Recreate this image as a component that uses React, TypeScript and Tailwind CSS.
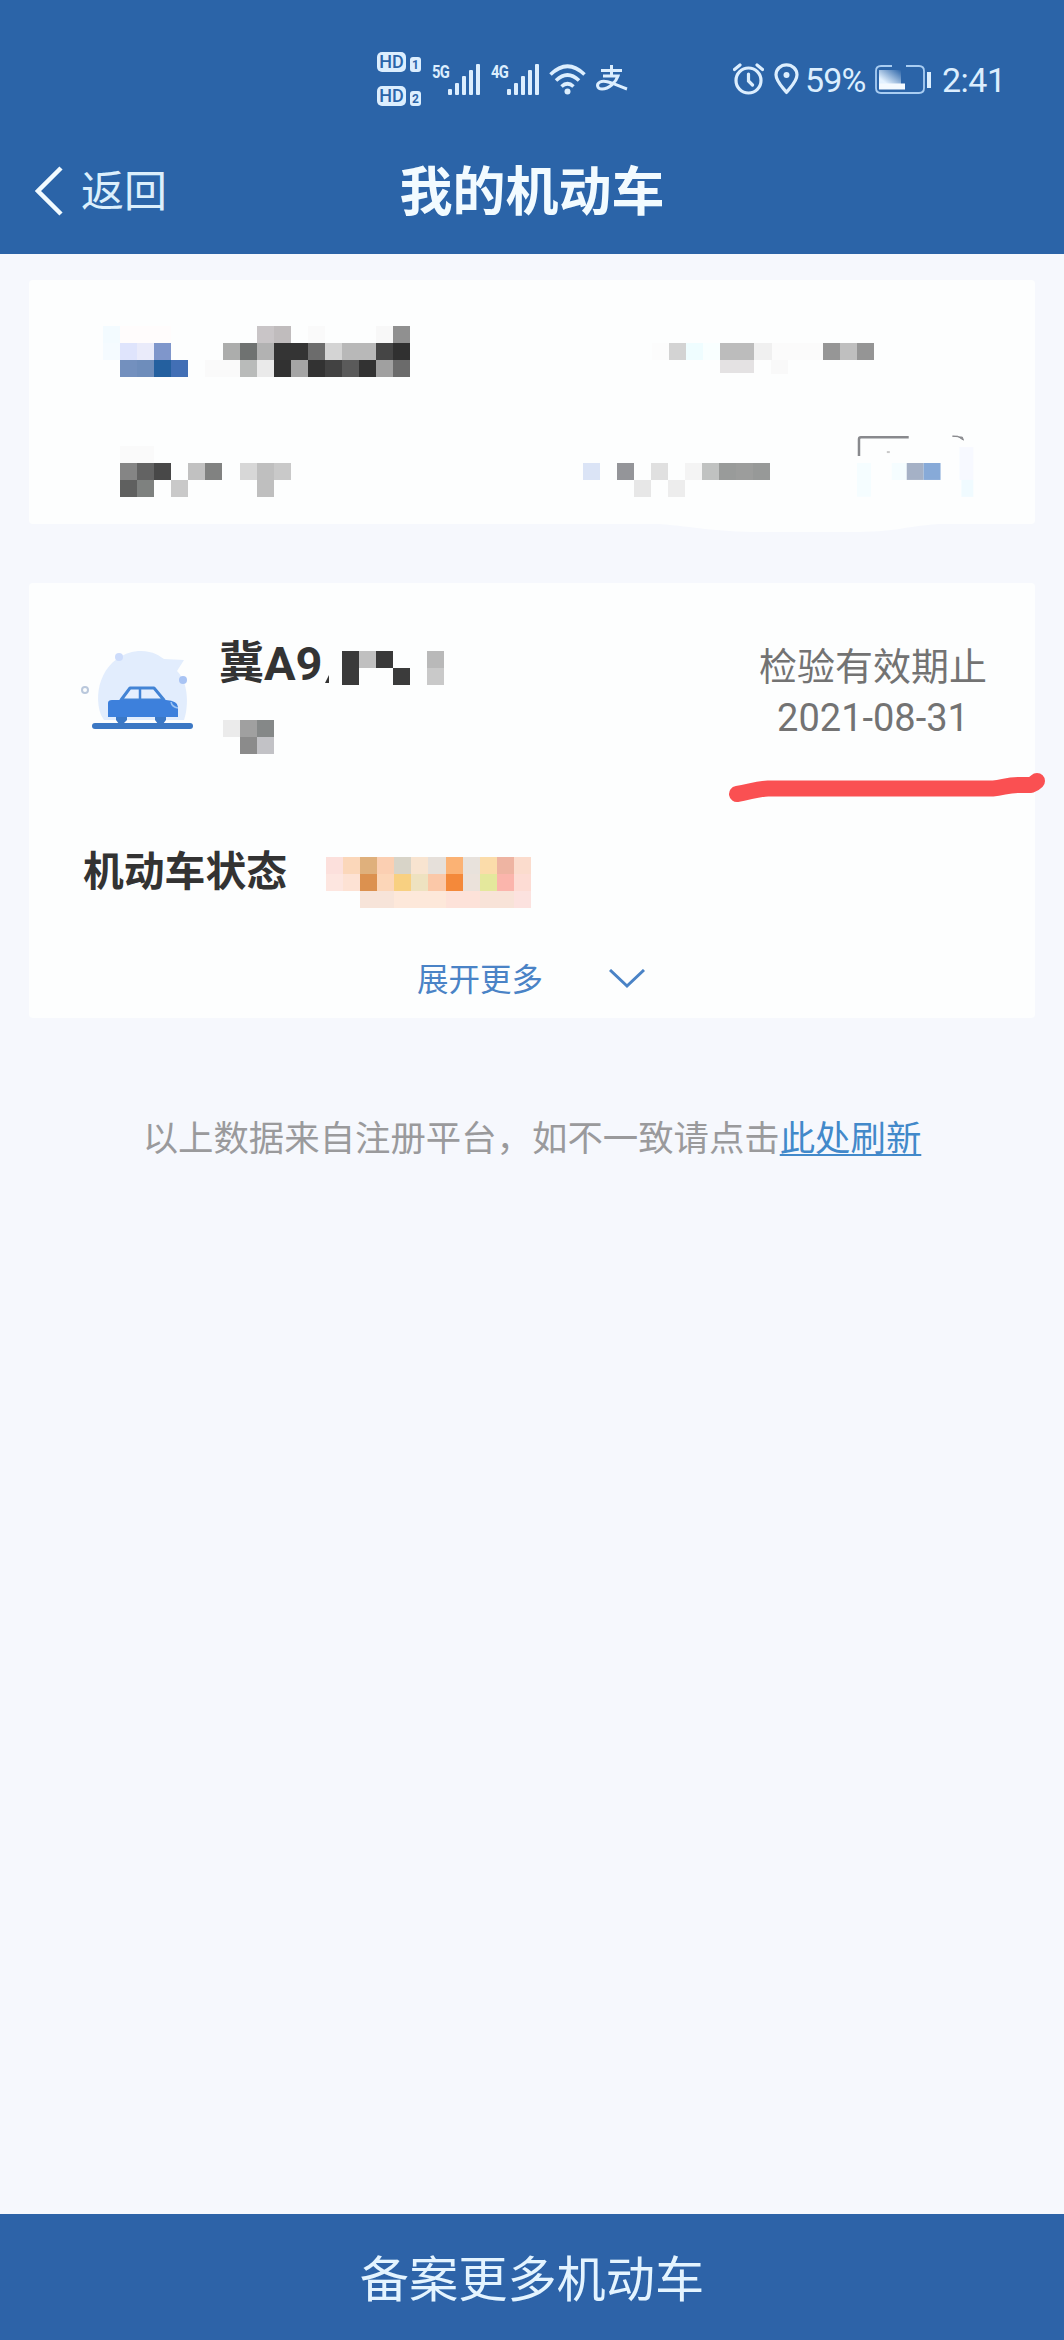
import React from 'react';

type Tile = [col: number, row: number, fill: string, span?: number];

const TILE = 17.08;

function Mosaic({ cols, rows, tiles, className }: { cols: number; rows: number; tiles: Tile[]; className?: string }) {
  const w = cols * TILE;
  const h = rows * TILE;
  return (
    <svg width={w} height={h} viewBox={`0 0 ${w} ${h}`} shapeRendering="crispEdges" className={className} aria-hidden="true">
      {tiles.map(([c, r, fill, span = 1], i) => (
        <rect key={i} x={c * TILE} y={r * TILE} width={span * TILE} height={TILE} fill={fill} />
      ))}
    </svg>
  );
}

const ownerName: Tile[] = [
  [0, 0, '#f3fbff'], [1, 0, '#fffcfc', 3],
  [0, 1, '#f5fbff'], [1, 1, '#dfe4fc'], [2, 1, '#eaebfa'], [3, 1, '#7f96cb'],
  [1, 2, '#7390be'], [2, 2, '#6e8dbb'], [3, 2, '#24609f'], [4, 2, '#426fb5'],
  [9, 0, '#c9c5c7'], [10, 0, '#c0bcbd'], [12, 0, '#fafafa'], [16, 0, '#f8f8f8'], [17, 0, '#909090'],
  [7, 1, '#acadac'], [8, 1, '#6f7271'], [9, 1, '#b2b2b2'], [10, 1, '#343434', 2], [12, 1, '#6c6c6c'],
  [13, 1, '#d4d4d4'], [14, 1, '#b8b8b8', 2], [16, 1, '#454545'], [17, 1, '#303030'],
  [6, 2, '#fafafa', 2], [8, 2, '#b9bbba'], [9, 2, '#eaeaea'], [10, 2, '#313131'], [11, 2, '#a5a5a5'], [12, 2, '#323232'],
  [13, 2, '#424242'], [14, 2, '#5a5a5a'], [15, 2, '#323232'], [16, 2, '#a0a0a0'], [17, 2, '#6b6b6b'],
];

const ownerId: Tile[] = [
  [0, 0, '#fcfcfc'], [1, 0, '#d3d3d3'], [2, 0, '#effdff'], [3, 0, '#f9ffff'], [4, 0, '#bcbcbc', 2], [6, 0, '#f0f0f0'],
  [7, 0, '#fbfbfb', 3], [10, 0, '#969696'], [11, 0, '#bfbfbf'], [12, 0, '#959595'],
];

const docType: Tile[] = [
  [0, 0, '#fafafa', 2],
  [0, 1, '#858585'], [1, 1, '#636363'], [2, 1, '#484848'], [4, 1, '#c1c1c1'], [5, 1, '#818281'],
  [7, 1, '#d7d7d7'], [8, 1, '#bfbfbf'], [9, 1, '#c9c9c9'],
  [0, 2, '#5f605f'], [1, 2, '#7e817f'], [3, 2, '#c9c9c9'], [8, 2, '#bfbfbf'],
];

const phone: Tile[] = [
  [0, 0, '#dbe4f6'], [2, 0, '#949599'], [4, 0, '#e0e0e0'], [6, 0, '#f4f4f4'], [7, 0, '#c0c2c1'],
  [8, 0, '#999b9a'], [9, 0, '#9c9d9c'], [10, 0, '#979998'],
  [3, 1, '#e7e7e7'], [5, 1, '#ededed'],
];

const statusTiles: Tile[] = [
  [0, 0, '#fce0dc'], [1, 0, '#fbd7ba'], [2, 0, '#dfb07c'], [3, 0, '#fbcfb2'], [4, 0, '#d8d4c8'], [5, 0, '#f8e4d0'],
  [6, 0, '#e6e0da'], [7, 0, '#fbb274'], [8, 0, '#e8e2dc'], [9, 0, '#fbdcaa'], [10, 0, '#eeb4a2'], [11, 0, '#fbdccd'],
  [0, 1, '#fde6e0'], [1, 1, '#fde2d4'], [2, 1, '#dc914f'], [3, 1, '#fcd6b8'], [4, 1, '#f8d081'], [5, 1, '#eee2c0'],
  [6, 1, '#fbc8a8'], [7, 1, '#f4893a'], [8, 1, '#ebe2db'], [9, 1, '#e4e89c'], [10, 1, '#fbb5ac'], [11, 1, '#fddcd4'],
  [2, 2, '#f7e4d9', 2], [4, 2, '#fde8da', 3], [7, 2, '#fde2d9', 2], [9, 2, '#f8e3d8', 2], [11, 2, '#fce2df'],
];

function HdBadge({ n }: { n: string }) {
  return (
    <div className="flex items-end gap-1">
      <span className="flex h-5 w-[29px] items-center justify-center rounded-[5px] bg-[#dceefe] text-[18px] leading-none font-medium text-[#2b64a8]">HD</span>
      <span className="flex h-[15px] w-[11px] items-center justify-center rounded-[3px] bg-[#dceefe] text-[12px] leading-none font-bold text-[#2b64a8]">{n}</span>
    </div>
  );
}

function Signal({ label }: { label: string }) {
  return (
    <div className="flex h-[31px] items-start">
      <span className="w-4">
        <span className="block w-[20px] origin-left scale-x-[0.82] text-[18px] leading-[15px] font-bold tracking-[-0.8px]">{label}</span>
      </span>
      <svg width="33" height="31" viewBox="0 0 33 31" fill="currentColor">
        <rect x="0" y="25" width="4" height="6" rx="1" />
        <rect x="7" y="19" width="4" height="12" rx="1" />
        <rect x="14" y="12" width="4" height="19" rx="1" />
        <rect x="21" y="6" width="4" height="25" rx="1" />
        <rect x="28" y="0" width="4" height="31" rx="1" />
      </svg>
    </div>
  );
}

function StatusBar() {
  return (
    <div className="flex h-[158px] items-center pl-[377px] text-[#dceefe]">
      <div className="flex flex-col gap-[14px]">
        <HdBadge n="1" />
        <HdBadge n="2" />
      </div>
      <div className="ml-[11px] flex gap-[10px]">
        <Signal label="5G" />
        <Signal label="4G" />
      </div>
      <svg width="37" height="31" viewBox="0 0 37 31" fill="none" stroke="currentColor" strokeWidth="3.6" className="ml-[9px]">
        <path d="M1.5 10.5Q18.500-6 35.500 10.500" />
        <path d="M7 16.500Q18.500 5.500 30 16.500" />
        <path d="M12.500 22.500Q18.500 17 24.500 22.500" />
        <circle cx="18.500" cy="27.500" r="3" fill="currentColor" stroke="none" />
      </svg>
      <svg width="34" height="28" viewBox="0 0 34 28" fill="none" stroke="currentColor" strokeWidth="3" className="ml-[9px]">
        <path d="M6 5.500H27M16.500 0V11M8 11H23C21 17 14 24 7 24C2 24 1 19 5 17C11 14 20 20 32 24" />
      </svg>
      <svg width="31" height="32" viewBox="0 0 31 32" fill="none" stroke="currentColor" strokeWidth="3.200" strokeLinecap="round" className="ml-[104px]">
        <circle cx="15.500" cy="17.500" r="12.500" />
        <path d="M15.500 11V18L19.500 22M1.500 6.500L7 2M29.500 6.500L24 2" />
      </svg>
      <svg width="25" height="32" viewBox="0 0 25 32" fill="none" stroke="currentColor" strokeWidth="3.200" className="ml-[10px]">
        <path d="M12.500 29.500C10 25.500 2 19 2 11.800A10.500 10 0 0 1 23 11.800C23 19 15 25.500 12.500 29.500Z" strokeLinejoin="round" />
        <circle cx="12.500" cy="12" r="3" fill="currentColor" stroke="none" />
      </svg>
      <span className="ml-[6px] w-[61px] pt-[2px] text-[34px] leading-none tracking-[-0.8px]">59%</span>
      <svg width="57" height="29" viewBox="0 0 57 29" fill="none" className="ml-[9px]">
        <defs>
          <linearGradient id="charge" x1="0" y1="1" x2="1" y2="0">
            <stop offset="0.250" stopColor="#e4f2ff" />
            <stop offset="1" stopColor="#2b64a8" />
          </linearGradient>
        </defs>
        <path d="M17 1H6Q1 1 1 6V23Q1 28 6 28H44Q49 28 49 23V6Q49 1 44 1H31" stroke="#a9cdf2" strokeWidth="1.800" />
        <rect x="4" y="5" width="22" height="16" fill="url(#charge)" />
        <rect x="4" y="18.500" width="26" height="6" fill="#f4faff" />
        <rect x="52" y="7" width="4" height="16" fill="#dceefe" />
      </svg>
      <span className="ml-[10px] pt-[2px] text-[34px] leading-none tracking-[-0.5px]">2:41</span>
    </div>
  );
}

function CarIllustration() {
  return (
    <svg width="120" height="84" viewBox="0 0 120 84" fill="none">
      <path d="M21 65C12 40 24 5 58 1C72 0 80 6 84 9L104 10L97 21C110 34 108 60 104 70H24Z" fill="#e2edfd" />
      <circle cx="39" cy="7" r="4" fill="#cddcfb" />
      <circle cx="103" cy="30" r="4" fill="#a9c4f4" />
      <circle cx="5" cy="40" r="3" stroke="#bac8dc" strokeWidth="2" />
      <path d="M41 50L50 38H74L84 50Z" fill="#e6f0fe" stroke="#4384d5" strokeWidth="3" strokeLinejoin="round" />
      <path d="M60 38V50" stroke="#4384d5" strokeWidth="2.500" />
      <path d="M28 53Q28 50 32 50H86Q98 51 98 57V67H28Z" fill="#3d80dc" />
      <path d="M91 52Q92 57 98 58" stroke="#9cc3f3" strokeWidth="1.500" />
      <path d="M36 67H47V70L43 74H39L36 70ZM75 67H86V70L83 74H78L75 70Z" fill="#3b78c6" />
      <path d="M15 76H110" stroke="#3c78c4" strokeWidth="6" strokeLinecap="round" />
    </svg>
  );
}

export default function App() {
  return (
    <div className="flex h-[2340px] w-[1064px] flex-col overflow-hidden bg-[#f6f8fd] font-[Roboto,'Noto_Sans_CJK_SC',sans-serif] text-[#333]">
      <header className="h-[254px] shrink-0 bg-[#2b64a8]">
        <StatusBar />
        <div className="relative flex h-[68px] items-center justify-center text-[#f2fbff]">
          <button className="absolute left-[35px] flex h-full items-center gap-[18px]">
            <svg width="28" height="50" viewBox="0 0 28 50" fill="none" stroke="currentColor" strokeWidth="4.500" className="-mt-[3px]">
              <path d="M26 2L3 25L26 48" />
            </svg>
            <span className="text-[43px] leading-[68px] text-[#dceffc]">返回</span>
          </button>
          <h1 className="pt-[2px] text-[53px] leading-[68px] font-bold">我的机动车</h1>
        </div>
      </header>

      <main className="flex flex-1 flex-col px-[29px] pt-[26px]">
        <section className="h-[244px] rounded-[4px] bg-[#fdfefe] pr-[59px] pl-[74px]">
          <div className="flex items-start pt-[46px]">
            <Mosaic cols={18} rows={3} tiles={ownerName} />
            <div className="mt-[17px] ml-[242px]">
              <Mosaic cols={13} rows={1} tiles={ownerId} className="block" />
              <div className="ml-[68px] flex">
                <div className="h-[13px] w-[34px] bg-[#e4e2e3]" />
                <div className="ml-[17px] h-[14px] w-[17px] bg-[#f9f9f9]" />
              </div>
            </div>
          </div>
          <div className="flex items-start pt-[58px] pl-[17px]">
            <div className="pt-[11px]">
              <Mosaic cols={10} rows={3} tiles={docType} />
            </div>
            <Mosaic cols={11} rows={2} tiles={phone} className="mt-[28px] ml-[292px]" />
            <svg width="120" height="66" viewBox="0 0 120 66" fill="none" className="ml-[87px]">
              <path d="M2 21V4Q2 2 4 2H52" stroke="#88898d" strokeWidth="2.500" />
              <path d="M96 1H101L107 5L106 2Z" fill="#88898d" stroke="#88898d" strokeWidth="1" />
              <path d="M30 17H33" stroke="#c8c8c8" strokeWidth="2" />
              <path d="M0 28H14V62H0ZM35 28H50V45H35Z" fill="#f5fdff" />
              <path d="M103 12H117V45H103Z" fill="#f7f9ff" />
              <path d="M105 45H117V62H105Z" fill="#f0fbff" />
              <path d="M50 28H67V45H50Z" fill="#a5b1c6" />
              <path d="M67 28H84V45H67Z" fill="#87aad8" />
            </svg>
          </div>
        </section>
        <svg width="280" height="8" viewBox="0 0 280 8" className="ml-[630px]">
          <path d="M0 0H280C240 3 240 8 190 8H110C50 8 40 3 0 0Z" fill="#fdfefe" />
        </svg>

        <section className="relative mt-[51px] h-[435px] rounded-[4px] bg-[#fdfefe]">
          <div className="flex h-[230px] items-start">
            <div className="pt-[67px] pl-[51px]">
              <CarIllustration />
            </div>
            <div className="pt-[50px] pl-[19px]">
              <div className="flex h-[62px] items-center">
                <span className="text-[45px] leading-[62px] font-bold">冀</span>
                <span className="text-[47px] leading-[62px] font-bold">A9</span>
                <svg width="5" height="17" viewBox="0 0 5 17" className="mt-[20px] ml-[2px]">
                  <path d="M0 17L4 9V17Z" fill="#333" />
                </svg>
                <Mosaic
                  cols={6}
                  rows={2}
                  className="mt-[9px] ml-[12px]"
                  tiles={[
                    [0, 0, '#3a3a3a'], [1, 0, '#c0c0c0'], [2, 0, '#393939'], [5, 0, '#b9b9b9'],
                    [0, 1, '#3a3a3a'], [3, 1, '#3b3b3b'], [5, 1, '#c9c9c9'],
                  ]}
                />
              </div>
              <Mosaic
                cols={3}
                rows={2}
                className="mt-[25px] ml-[4px]"
                tiles={[[0, 0, '#ebebeb'], [1, 0, '#a0a0a0'], [2, 0, '#858888'], [1, 1, '#8b8b8b'], [2, 1, '#c2c2c6']]}
              />
            </div>
            <div className="mr-[48px] ml-auto pt-[59px] text-center text-[38px] leading-[51px] text-[#737373]">
              <p>检验有效期止</p>
              <p>2021-08-31</p>
            </div>
          </div>
          <div className="flex h-[116px] items-start pl-[54px]">
            <h2 className="pt-[29px] text-[40.8px] leading-[60px] font-bold">机动车状态</h2>
            <Mosaic cols={12} rows={3} tiles={statusTiles} className="mt-[44px] ml-[39px]" />
          </div>
          <button className="ml-[388px] flex h-[100px] items-center gap-[66px] text-[#4a83c6]">
            <span className="pt-[4px] text-[31.500px] leading-[50px]">展开更多</span>
            <svg width="36" height="20" viewBox="0 0 36 20" fill="none" stroke="currentColor" strokeWidth="3">
              <path d="M1 1L18 17L35 1" />
            </svg>
          </button>
          <svg width="320" height="32" viewBox="0 0 320 32" fill="none" className="absolute top-[190px] left-[699px]">
            <path d="M9 21C22 19 28 16 40 15.500H265C275 15 278 12 290 12H303Q306 11 309 8" stroke="#fa5052" strokeWidth="16" strokeLinecap="round" strokeLinejoin="round" />
          </svg>
        </section>

        <p className="mt-[96px] -ml-[10px] w-[1026px] text-center text-[35.400px] leading-[50px] whitespace-nowrap text-[#9a9a9c]">
          以上数据来自注册平台，如不一致请点击<a className="text-[#4289ca] underline decoration-2 underline-offset-[3px]">此处刷新</a>
        </p>
      </main>

      <button className="flex h-[126px] w-full shrink-0 items-center justify-center bg-[#2d63a8] pt-[6px] text-[49.200px] leading-[120px] text-[#e4f4ff]">
        备案更多机动车
      </button>
    </div>
  );
}
